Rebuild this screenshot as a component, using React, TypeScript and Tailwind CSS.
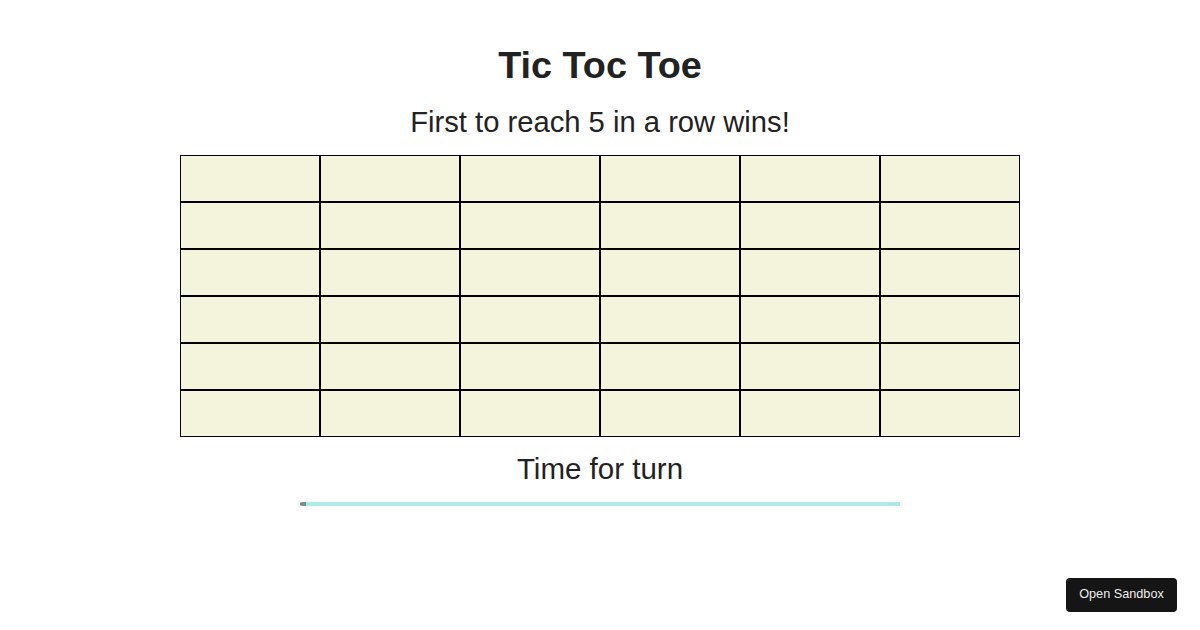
import React from 'react';

const ROWS = 6;
const COLS = 6;

const App = () => {
  const cells = Array.from({ length: ROWS * COLS }, (_, i) => i);

  return (
    <div
      className="relative min-h-[630px] w-full bg-white text-[#222]"
      style={{ fontFamily: '"Liberation Sans", Arial, sans-serif' }}
    >
      <div className="flex flex-col items-center pt-[43px]">
        <h1 className="text-[37.8px] font-bold leading-[44px]">Tic Toc Toe</h1>
        <h2 className="mt-[17px] text-[29.2px] leading-[36px]">First to reach 5 in a row wins!</h2>

        <div className="mt-[15px] grid grid-cols-[repeat(6,140px)]">
          {cells.map((i) => (
            <div key={i} className="h-[47px] w-[140px] border border-black bg-[#f4f4dc]" />
          ))}
        </div>

        <p className="mt-[14px] text-[29.5px] leading-[36px]">Time for turn</p>

        <div className="mt-[15px] flex h-[4px] w-[600px] overflow-hidden rounded-l-sm bg-[#aeebe6]">
          <div className="h-full w-[6px] bg-[#7f8c8b]" />
        </div>
      </div>

      <button className="absolute bottom-[18px] right-[23px] flex h-[34px] w-[111px] items-center justify-center rounded-[4px] bg-[#151515] text-[12.7px] text-[#eee]">
        Open Sandbox
      </button>
    </div>
  );
};

export default App;
